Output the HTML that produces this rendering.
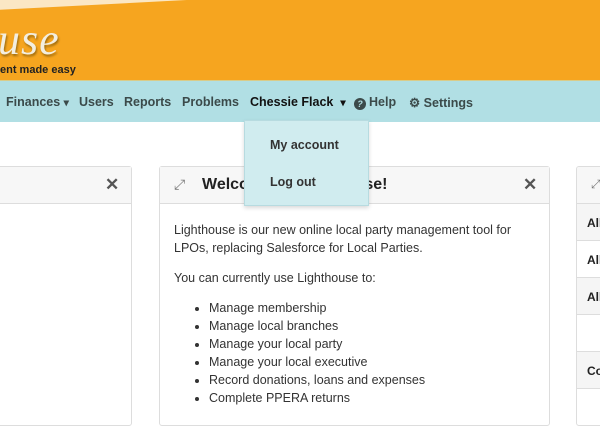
<!DOCTYPE html>
<html><head><style>
*{margin:0;padding:0;box-sizing:border-box}
body{width:600px;height:400px;overflow:hidden;background:#fff;font-family:"Liberation Sans",sans-serif;position:relative}
.hdr{position:absolute;left:0;top:0;width:600px;height:80px;background:#f6a51f}
.logo{position:absolute;left:-2px;top:14px;font-family:"Liberation Serif",serif;font-style:italic;font-size:44px;color:#f3eee0;text-shadow:1px 2px 2px #9a6a10;letter-spacing:1px}
.tag{position:absolute;left:0;top:64px;font-size:11px;font-weight:bold;color:#222}
.nav{position:absolute;left:0;top:80px;width:600px;height:42px;background:#b1dfe4;border-top:1px solid #d9cc8a}
.nav span{position:absolute;top:14px;font-size:12.5px;font-weight:bold;color:#3b4a4a}
.dd{position:absolute;left:244px;top:120px;width:125px;height:86px;background:#d0ecef;border:1px solid #b7dbe0;box-shadow:0 2px 4px rgba(0,0,0,.15);z-index:5}
.dd div{position:absolute;left:25px;font-size:12.5px;font-weight:bold;color:#333}
.panel{position:absolute;top:166px;height:260px;border:1px solid #ddd;border-radius:3px;background:#fff}
.ph{height:37px;background:#f7f7f7;border-bottom:1px solid #ddd;position:relative}
.x{position:absolute;top:8px;font-size:17px;font-weight:bold;color:#555}
.body{position:absolute;left:174px;top:221px;font-size:12.5px;color:#333;line-height:18px}
.body p{margin-bottom:12px}
.body ul{margin-left:35px}
.row{position:absolute;left:0;width:30px;height:37px;font-size:12px;font-weight:bold;color:#222;padding:12px 0 0 10px;border-bottom:1px solid #ddd}
.ic{display:inline-block;width:12px;height:12px;border-radius:50%;background:#3b4a4a;color:#b1dfe4;font-size:9px;text-align:center;line-height:12px;vertical-align:-1px;margin-right:3px}
</style></head><body>
<div class="hdr">
<div style="position:absolute;left:-20px;top:-20px;width:260px;height:24px;background:#fbe7c4;transform:rotate(-3deg)"></div>
<div class="logo">use</div>
<div class="tag">ent made easy</div>
</div>
<div class="nav">
<span style="left:6px">Finances <small>▾</small></span>
<span style="left:79px">Users</span>
<span style="left:124px">Reports</span>
<span style="left:182px">Problems</span>
<span style="left:250px;color:#111">Chessie Flack &nbsp;<small>▾</small></span>
<span style="left:354px"><i class="ic">?</i>Help</span>
<span style="left:409px">⚙ Settings</span>
</div>
<div class="dd"><div style="top:17px">My account</div><div style="top:54px">Log out</div></div>
<div class="panel" style="left:-5px;width:137px"><div class="ph"><span class="x" style="left:109px">✕</span></div></div>
<div class="panel" style="left:159px;width:391px"><div class="ph">
<span style="position:absolute;left:14px;top:9px;font-size:14px;color:#777">⤢</span>
<span style="position:absolute;left:42px;top:9px;font-size:16px;font-weight:bold;color:#222">Welcome to Lighthouse!</span>
<span class="x" style="left:363px">✕</span></div></div>
<div class="body">
<p>Lighthouse is our new online local party management tool for<br>LPOs, replacing Salesforce for Local Parties.</p>
<p>You can currently use Lighthouse to:</p>
<ul><li>Manage membership</li><li>Manage local branches</li><li>Manage your local party</li><li>Manage your local executive</li><li>Record donations, loans and expenses</li><li>Complete PPERA returns</li></ul>
</div>
<div class="panel" style="left:576px;width:40px;overflow:hidden"><div class="ph"><span style="position:absolute;left:14px;top:10px;font-size:12px;color:#777">⤢</span></div>
<div class="row" style="top:37px;background:#f5f5f5">All</div>
<div class="row" style="top:74px">All</div>
<div class="row" style="top:111px;background:#f5f5f5">All</div>
<div class="row" style="top:148px"></div>
<div class="row" style="top:185px;background:#f5f5f5">Co</div>
</div>
</body></html>
